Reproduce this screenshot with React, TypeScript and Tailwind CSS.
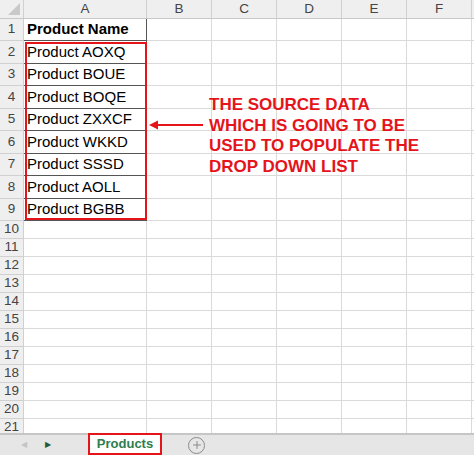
import { Plus } from "lucide-react";

const cols = [
  { label: "A", w: 123 },
  { label: "B", w: 65 },
  { label: "C", w: 65 },
  { label: "D", w: 65 },
  { label: "E", w: 65 },
  { label: "F", w: 65 },
];

const products = [
  "Product Name",
  "Product AOXQ",
  "Product BOUE",
  "Product BOQE",
  "Product ZXXCF",
  "Product WKKD",
  "Product SSSD",
  "Product AOLL",
  "Product BGBB",
];

// rows 1-9 are taller (data), 10+ are default height
const rowHeights = [22, 23, 22, 23, 22, 23, 22, 23, 22, 18, 18, 18, 18, 18, 18, 18, 18, 18, 18, 18, 18];

const font = { fontFamily: '"Liberation Sans", Arial, sans-serif' };

function HeaderRow() {
  return (
    <div className="flex h-[19px] bg-[#efefef] border-b border-[#c8c8c8]">
      <div className="relative w-[24px] shrink-0 border-r border-[#d0d0d0]">
        <svg className="absolute right-[3px] bottom-[3px]" width="12" height="12" viewBox="0 0 12 12">
          <polygon points="12,0 12,12 0,12" fill="#c9c9c9" />
        </svg>
      </div>
      {cols.map((c) => (
        <div
          key={c.label}
          className="shrink-0 flex items-center justify-center text-[13.5px] text-[#444] border-r border-[#d0d0d0]"
          style={{ width: c.w }}
        >
          {c.label}
        </div>
      ))}
      <div className="flex-1" />
    </div>
  );
}

function Row({ n, h }: { n: number; h: number }) {
  const inTable = n <= 9;
  const text = products[n - 1];
  return (
    <div className="flex shrink-0" style={{ height: h }}>
      <div className="w-[24px] shrink-0 bg-[#efefef] border-r border-b border-[#d0d0d0] flex items-center justify-center text-[13.5px] text-[#444]">
        {n}
      </div>
      <div
        className={`w-[123px] shrink-0 flex items-center pl-[3px] text-[15px] text-black border-b border-r ${
          inTable ? "border-[#555]" : "border-[#dadada]"
        } ${n === 1 ? "font-bold" : ""}`}
      >
        {text}
      </div>
      {cols.slice(1).map((c) => (
        <div key={c.label} className="w-[65px] shrink-0 border-r border-b border-[#dadada]" />
      ))}
      <div className="flex-1 border-b border-[#dadada]" />
    </div>
  );
}

export default function App() {
  return (
    <div className="w-[474px] h-[455px] flex flex-col bg-white overflow-hidden" style={font}>
      <div className="relative flex-1 overflow-hidden">
        <HeaderRow />
        {rowHeights.map((h, i) => (
          <Row key={i} n={i + 1} h={h} />
        ))}

        {/* highlight box around source data */}
        <div className="absolute left-[25px] top-[42px] w-[122px] h-[178px] border-2 border-[#e5141b]" />

        {/* arrow */}
        <svg className="absolute left-[149px] top-[119px]" width="56" height="12" viewBox="0 0 56 12">
          <line x1="6" y1="6" x2="54" y2="6" stroke="#e5141b" strokeWidth="2.2" />
          <polygon points="0,6 9,1.5 9,10.5" fill="#e5141b" />
        </svg>

        {/* callout */}
        <div className="absolute left-[209px] top-[95px] text-[17px] leading-[20.5px] font-bold text-[#e5141b]">
          <div>THE SOURCE DATA</div>
          <div>WHICH IS GOING TO BE</div>
          <div>USED TO POPULATE THE</div>
          <div>DROP DOWN LIST</div>
        </div>
      </div>

      {/* sheet tabs */}
      <div className="h-[22px] shrink-0 flex items-stretch bg-[#e6e6e6] border-t-2 border-[#c6c6c6]">
        <div className="w-[88px] flex items-center">
          <span className="ml-[21px] text-[8px] text-[#c4c4c4]">◀</span>
          <span className="ml-[18px] text-[8px] text-[#1f5c3a]">▶</span>
        </div>
        <div className="w-[74px] -mt-[2px] bg-white border-2 border-[#e5141b] flex items-center justify-center text-[13px] font-bold text-[#2e7d4f]">
          Products
        </div>
        <div className="ml-[26px] flex items-center">
          <div className="w-[17px] h-[17px] rounded-full border border-[#8a8a8a] flex items-center justify-center">
            <Plus size={12} strokeWidth={2} color="#8a8a8a" />
          </div>
        </div>
      </div>
    </div>
  );
}
